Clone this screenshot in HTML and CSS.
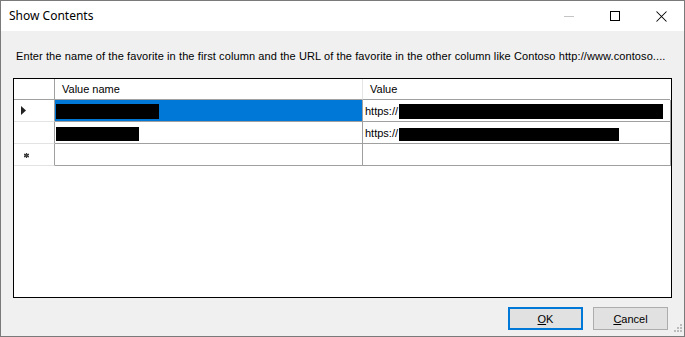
FILE: index.html
```html
<!DOCTYPE html>
<html>
<head>
<meta charset="utf-8">
<link rel="stylesheet" href="styles.css">
</head>
<body>
<div class="window">
  <div class="titlebar">
    <div class="title">Show Contents</div>
    <div class="caption">
      <div class="cbtn"><svg width="10" height="10" viewBox="0 0 10 10"><line x1="0" y1="5.5" x2="10" y2="5.5" stroke="#c4c4c4" stroke-width="1"/></svg></div>
      <div class="cbtn"><svg width="10" height="10" viewBox="0 0 10 10"><rect x="0.5" y="0.5" width="9" height="9" fill="none" stroke="#000" stroke-width="1"/></svg></div>
      <div class="cbtn"><svg width="11" height="11" viewBox="0 0 11 11"><path d="M0.5 0.5 L10.5 10.5 M10.5 0.5 L0.5 10.5" stroke="#000" stroke-width="1.05"/></svg></div>
    </div>
  </div>
  <div class="content">
    <div class="label">Enter the name of the favorite in the first column and the URL of the favorite in the other column like Contoso http://www.contoso....</div>
    <div class="grid">
      <div class="row head">
        <div class="rh"></div>
        <div class="cell c1">Value name</div>
        <div class="cell c2">Value</div>
      </div>
      <div class="row">
        <div class="rh arrow"><svg width="5" height="9" viewBox="0 0 5 9"><path d="M0 0 L5 4.5 L0 9 Z" fill="#222"/></svg></div>
        <div class="cell c1 sel"><span class="redact r1"></span></div>
        <div class="cell c2">https://<span class="redact r3"></span></div>
      </div>
      <div class="row">
        <div class="rh"></div>
        <div class="cell c1"><span class="redact r2"></span></div>
        <div class="cell c2">https://<span class="redact r4"></span></div>
      </div>
      <div class="row">
        <div class="rh star"><svg width="5" height="5" viewBox="0 0 5 5"><path d="M2.5 0 V5 M0 1.2 L5 3.8 M5 1.2 L0 3.8" stroke="#333" stroke-width="1.3"/><circle cx="2.5" cy="2.5" r="1.6" fill="#444"/></svg></div>
        <div class="cell c1"></div>
        <div class="cell c2"></div>
      </div>
    </div>
    <div class="footer">
      <div class="btn default"><span><u>O</u>K</span></div>
      <div class="btn"><span><u>C</u>ancel</span></div>
    </div>
  </div>
  <svg class="grip" width="10" height="10" viewBox="0 0 10 10">
    <rect x="8" y="0" width="2" height="2" fill="#bcbcbc"/>
    <rect x="5" y="3" width="2" height="2" fill="#bcbcbc"/>
    <rect x="8" y="3" width="2" height="2" fill="#bcbcbc"/>
    <rect x="2" y="6" width="2" height="2" fill="#bcbcbc"/>
    <rect x="5" y="6" width="2" height="2" fill="#bcbcbc"/>
    <rect x="8" y="6" width="2" height="2" fill="#bcbcbc"/>
  </svg>
</div>
</body>
</html>
```
FILE: styles.css
```css
html, body {
  margin: 0;
  padding: 0;
  background: #f0f0f0;
}
.window {
  position: relative;
  width: 685px;
  height: 337px;
  box-sizing: border-box;
  border: 1px solid #7a7a7a;
  background: #f0f0f0;
  display: flex;
  flex-direction: column;
  font-family: "Liberation Sans", Arial, sans-serif;
  font-size: 11px;
  color: #000;
}
.titlebar {
  height: 30px;
  background: #fff;
  display: flex;
  align-items: stretch;
  flex: none;
}
.title {
  flex: 1;
  padding-left: 8px;
  display: flex;
  align-items: center;
  font-family: "Noto Sans", "Open Sans", sans-serif;
  font-size: 12px;
  padding-bottom: 1px;
}
.caption {
  display: flex;
}
.cbtn {
  width: 46px;
  display: flex;
  align-items: center;
  justify-content: center;
}
.cbtn svg { display: block; }
.content {
  flex: 1;
  display: flex;
  flex-direction: column;
  padding: 19px 12px 0 12px;
}
.label {
  padding-left: 3px;
  line-height: 13px;
  height: 13px;
  white-space: nowrap;
  letter-spacing: 0.1px;
  color: #000;
}
.grid {
  margin-top: 15px;
  width: 659px;
  height: 220px;
  box-sizing: border-box;
  border: 1px solid #000;
  background: #fff;
  display: flex;
  flex-direction: column;
}
.row {
  display: flex;
  height: 22px;
  box-sizing: border-box;
}
.row.head {
  height: 21px;
}
.rh {
  width: 41px;
  box-sizing: border-box;
  border-right: 1px solid #a0a0a0;
  border-bottom: 1px solid #e3e3e3;
  display: flex;
  align-items: center;
}
.head .rh { border-bottom: 1px solid #a0a0a0; }
.cell {
  width: 308px;
  box-sizing: border-box;
  border-right: 1px solid #a0a0a0;
  border-bottom: 1px solid #a0a0a0;
  display: flex;
  align-items: center;
  padding-left: 2px;
  white-space: nowrap;
  overflow: hidden;
}
.head .cell {
  padding-left: 7px;
  border-right-color: #e5e5e5;
  border-bottom-color: #a0a0a0;
}
.head .cell.c2 { border-right: none; width: 307px; }
.head .cell.c1 { border-right: 1px solid #e5e5e5; }
.cell.sel {
  background: #0078d7;
  padding-left: 1px;
}
.arrow { padding-left: 7px; padding-bottom: 1px; }
.arrow svg, .star svg { display: block; }
.star { padding-left: 10px; padding-top: 2px; }
.redact {
  display: inline-block;
  background: #000;
}
.r1 { width: 103px; height: 15px; margin-top: 1px; }
.r2 { width: 83px; height: 14px; margin-left: -1px; margin-top: 3px; }
.r3 { width: 264px; height: 15px; margin-left: 1px; margin-top: 1px; }
.r4 { width: 220px; height: 13px; margin-left: 1px; margin-top: 3px; }
.footer {
  display: flex;
  justify-content: flex-end;
  gap: 10px;
  margin-top: 9px;
  margin-right: 4px;
}
.btn {
  width: 75px;
  height: 23px;
  box-sizing: border-box;
  border: 1px solid #adadad;
  background: #e1e1e1;
  display: flex;
  align-items: center;
  justify-content: center;
}
.btn.default {
  border: 2px solid #0078d7;
}
.btn u { text-decoration-thickness: 1px; text-underline-offset: 1px; }
.grip {
  position: absolute;
  right: 2px;
  bottom: 2px;
}
```
